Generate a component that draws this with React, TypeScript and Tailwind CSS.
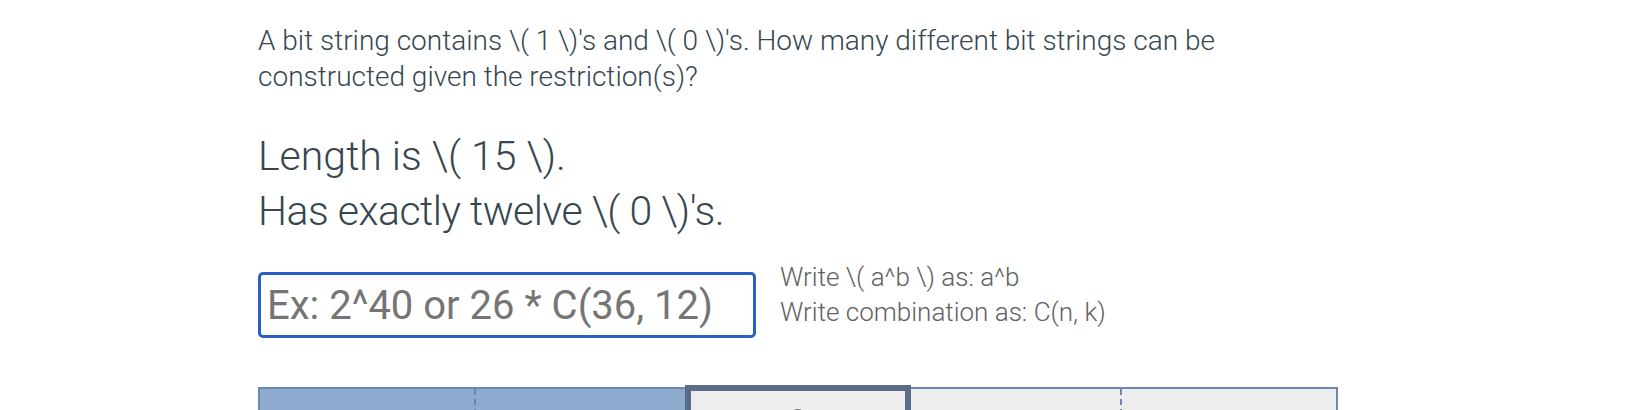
import React from 'react'

const segments = [
  { state: 'done' },
  { state: 'done' },
  { state: 'current', label: '3' },
  { state: 'todo' },
  { state: 'todo' },
]

const LevelBar = () => {
  return (
    <div className="flex w-[1080px] h-[60px] border-2 border-[#6a88b0]">
      {segments.map((seg, i) => {
        const next = segments[i + 1]
        const dashed = next && seg.state !== 'current' && next.state !== 'current'
        if (seg.state === 'current') {
          return (
            <div
              key={i}
              className="relative z-10 flex-1 bg-[#ededed] border-2 border-[#5b6b8c] outline-4 outline-solid outline-[#5b6b8c] flex justify-center pt-[14px]"
            >
              <span className="text-[28px] leading-[30px] text-[#777]">{seg.label}</span>
            </div>
          )
        }
        return (
          <div
            key={i}
            className={
              'flex-1 ' +
              (seg.state === 'done' ? 'bg-[#8eabcf]' : 'bg-[#ededed]') +
              (dashed ? ' border-r-2 border-dashed border-[#6a88b0]' : '')
            }
          />
        )
      })}
    </div>
  )
}

export default function App() {
  return (
    <div
      className="h-[410px] overflow-hidden bg-white pl-[258px] pt-[23px]"
      style={{ fontFamily: 'Roboto, "Liberation Sans", sans-serif' }}
    >
      <p className="text-[28px] leading-[36px] font-light text-[#37474f] w-[1100px]">
        A bit string contains \( 1 \)'s and \( 0 \)'s. How many different bit strings can be
        <br />
        constructed given the restriction(s)?
      </p>
      <div className="mt-[34px] text-[41px] leading-[55px] font-light text-[#37474f]">
        <div>Length is \( 15 \).</div>
        <div className="tracking-[-0.5px]">Has exactly twelve \( 0 \)'s.</div>
      </div>
      <div className="mt-[21px] flex items-start">
        <input
          type="text"
          placeholder="Ex: 2^40 or 26 * C(36, 12)"
          className="mt-[12px] w-[498px] h-[66px] border-[3px] border-[#2a5fc7] rounded-[5px] px-[6px] text-[40px] text-[#333] placeholder:text-[#757575] outline-none"
        />
        <div className="ml-[24px] text-[26px] leading-[35px] font-light text-[#616161]">
          <div>Write \( a^b \) as: a^b</div>
          <div>Write combination as: C(n, k)</div>
        </div>
      </div>
      <div className="mt-[49px]">
        <LevelBar />
      </div>
    </div>
  )
}
